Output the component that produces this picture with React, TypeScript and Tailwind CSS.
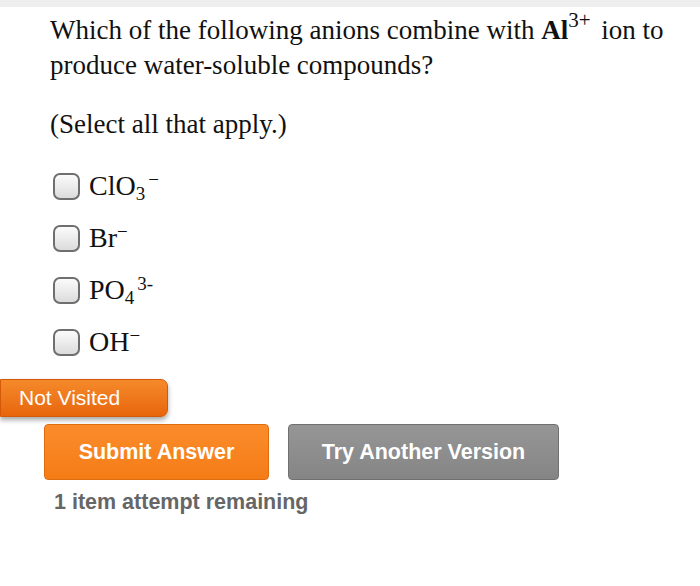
import React from "react";

const serif = { fontFamily: '"Liberation Serif", "Times New Roman", serif' };
const sans = { fontFamily: '"Liberation Sans", Arial, sans-serif' };

function Box() {
  return (
    <div className="w-[27px] h-[27px] rounded-[7px] border-2 border-[#6f6f6f] bg-gradient-to-b from-[#fbfbfb] to-[#dcdcdc] shrink-0" />
  );
}

function Option({ children }: { children: React.ReactNode }) {
  return (
    <div className="flex items-center gap-[9px] h-[52px]">
      <Box />
      <div className="text-[28px] text-[#111] leading-none" style={serif}>
        {children}
      </div>
    </div>
  );
}

export default function App() {
  return (
    <div className="w-[700px] h-[586px] bg-white overflow-hidden relative">
      <div className="h-[7px] bg-[#eeeeee]" />
      <div className="pl-[50px] pr-[10px] pt-[6px] text-[27px] leading-[35px] text-[#111]" style={serif}>
        <p>
          Which of the following anions combine with <b>Al</b>
          <sup className="text-[21px] top-[-0.55em] mr-[4px]">3+</sup> ion to produce water-soluble compounds?
        </p>
        <p className="mt-[24px]">(Select all that apply.)</p>
      </div>
      <div className="pl-[53px] mt-[18px] flex flex-col">
        <Option>
          ClO<sub className="text-[19px]">3</sub>
          <sup className="text-[19px] ml-[3px]">−</sup>
        </Option>
        <Option>
          Br<sup className="text-[19px]">−</sup>
        </Option>
        <Option>
          PO<sub className="text-[19px]">4</sub>
          <sup className="text-[19px] ml-[3px]">3-</sup>
        </Option>
        <Option>
          OH<sup className="text-[19px]">−</sup>
        </Option>
      </div>
      <div className="mt-[11px] w-[168px] h-[38px] rounded-r-[7px] bg-gradient-to-b from-[#f58a2a] to-[#e8650a] border border-[#d45a08] shadow-[0_3px_5px_rgba(0,0,0,0.35)] flex items-center pl-[18px] text-white text-[21px]" style={sans}>
        Not Visited
      </div>
      <div className="flex gap-[19px] pl-[44px] mt-[7px]">
        <button className="w-[225px] h-[56px] rounded-[4px] bg-gradient-to-b from-[#fb8c2a] to-[#f47c16] border border-[#e06c10] text-white text-[21.5px] font-bold" style={sans}>
          Submit Answer
        </button>
        <button className="w-[271px] h-[56px] rounded-[4px] bg-gradient-to-b from-[#969696] to-[#858585] border border-[#707070] text-white text-[21.5px] font-bold" style={sans}>
          Try Another Version
        </button>
      </div>
      <div className="pl-[54px] mt-[6px] text-[21.5px] font-bold text-[#666]" style={sans}>
        1 item attempt remaining
      </div>
    </div>
  );
}
